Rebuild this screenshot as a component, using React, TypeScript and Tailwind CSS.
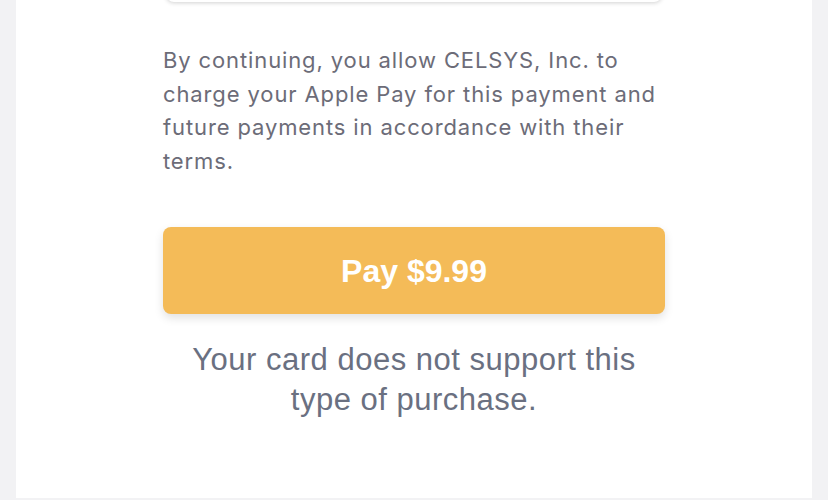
export default function App() {
  return (
    <div className="w-[828px] h-[500px] bg-[#f2f2f4] overflow-hidden">
      <div className="mx-4 h-[498px] bg-white flex flex-col items-center">
        <div className="w-[496px] h-[40px] -mt-[38px] rounded-lg bg-white shadow-[0_1px_4px_rgba(0,0,0,0.18)]" />
        <p className="w-[502px] mt-[42px] text-[22px] leading-[33.5px] tracking-[0.88px] text-[#6c6c78] font-['Inter','Open_Sans',sans-serif]">
          By continuing, you allow CELSYS, Inc. to charge your Apple Pay for this payment and future payments in accordance with their terms.
        </p>
        <button className="w-[502px] h-[87px] mt-[49px] rounded-lg bg-[#f4bb58] text-white font-bold text-[32px] font-['Liberation_Sans',Arial,sans-serif] shadow-[0_4px_10px_rgba(0,0,0,0.12)]">
          Pay $9.99
        </button>
        <p className="w-[470px] mt-[26px] text-center text-[31px] leading-[40px] tracking-[0.5px] text-[#6a7081] font-['Liberation_Sans',Arial,sans-serif]">
          Your card does not support this type of purchase.
        </p>
      </div>
    </div>
  );
}
